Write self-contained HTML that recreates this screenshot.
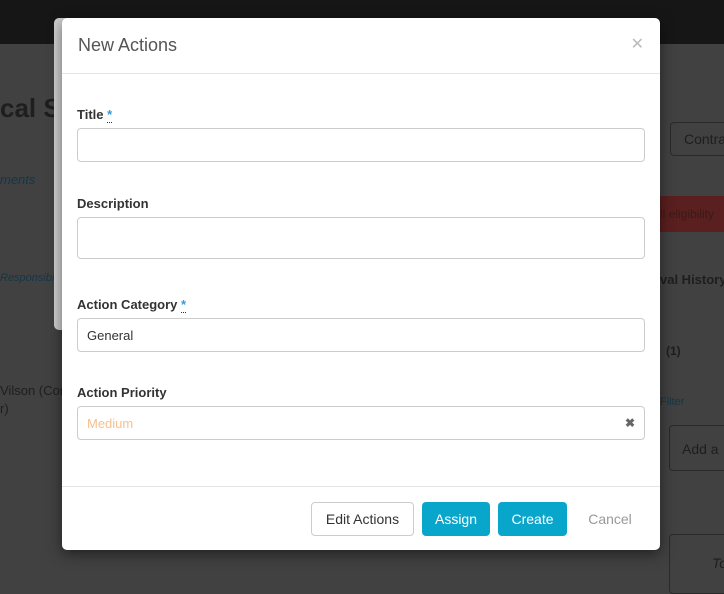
<!DOCTYPE html>
<html style="background:#414141"><head><style>
*{box-sizing:border-box;margin:0;padding:0}
body{width:724px;height:588px;overflow:hidden;background:#414141;font-family:"Liberation Sans",sans-serif;position:relative}
.nav{position:absolute;left:0;top:0;width:724px;height:44px;background:#161616}
.bg{position:absolute;color:#1e1e1e;white-space:nowrap;overflow:hidden}
.m2{position:absolute;left:54px;top:18px;width:560px;height:312px;background:#cfcfcf;border-radius:5px}
.modal{position:absolute;left:62px;top:18px;width:598px;height:532px;background:#fff;border-radius:5px;box-shadow:0 4px 14px rgba(0,0,0,.5)}
.hd{height:56px;border-bottom:1px solid #e5e5e5;padding:17px 16px;font-size:18px;color:#555;position:relative}
.x{position:absolute;right:16px;top:16px;color:#bbb;font-size:16px}
label{position:absolute;left:15px;font-size:13px;font-weight:bold;color:#333}
label i{font-style:normal;color:#3a9ad9;border-bottom:1px dotted #333}
.in{position:absolute;left:15px;width:568px;border:1px solid #ccc;border-radius:4px;font-size:13px;padding:0 9px;display:flex;align-items:center;color:#333}
.ft{position:absolute;left:0;top:468px;width:598px;border-top:1px solid #e5e5e5}
.btn{position:absolute;top:484px;height:34px;border-radius:4px;font-size:14px;display:flex;align-items:center;justify-content:center}
</style></head><body>
<div class="nav"></div>
<div class="bg" style="left:0;top:93px;font-size:26px;font-weight:bold">cal S</div>
<div class="bg" style="left:0;top:172px;font-size:13px;font-style:italic;color:#14364a">ments</div>
<div class="bg" style="left:0;top:272px;font-size:11px;font-style:italic;color:#14364a">Responsibi</div>
<div class="bg" style="left:0;top:382px;font-size:13px;line-height:18px">Vilson (Com<br>r)</div>
<div class="bg" style="left:670px;top:122px;width:60px;height:34px;border:1px solid #2a2a2a;border-radius:4px;font-size:14px;padding:8px 13px">Contra</div>
<div class="bg" style="left:660px;top:196px;width:70px;height:36px;background:#5a1f1f;font-size:12px;color:#3a1a1a;padding:11px 0">ll eligibility</div>
<div class="bg" style="left:660px;top:272px;font-size:13px;font-weight:bold">val History</div>
<div class="bg" style="left:666px;top:344px;font-size:12px;font-weight:bold">(1)</div>
<div class="bg" style="left:660px;top:396px;font-size:11px;color:#14364a">Filter</div>
<div class="bg" style="left:669px;top:425px;width:60px;height:46px;border:1px solid #2a2a2a;border-radius:4px;font-size:14px;padding:15px 12px">Add a</div>
<div class="bg" style="left:669px;top:534px;width:60px;height:60px;border:1px solid #2a2a2a;border-radius:4px;font-size:14px;font-style:italic;padding:20px 42px">To</div>
<div class="m2"></div>
<div class="modal">
<div class="hd">New Actions<span class="x">✕</span></div>
<label style="top:89px">Title <i>*</i></label>
<div class="in" style="top:110px;height:34px"></div>
<label style="top:178px">Description</label>
<div class="in" style="top:199px;height:42px"></div>
<label style="top:279px">Action Category <i>*</i></label>
<div class="in" style="top:300px;height:34px">General</div>
<label style="top:367px">Action Priority</label>
<div class="in" style="top:388px;height:34px;color:#f9c08d;justify-content:space-between">Medium<span style="color:#666;font-size:12px;font-weight:bold">✖</span></div>
<div class="ft"></div>
<div class="btn" style="left:249px;width:103px;border:1px solid #ccc;color:#333">Edit Actions</div>
<div class="btn" style="left:360px;width:68px;background:#09a6cc;color:#fff">Assign</div>
<div class="btn" style="left:436px;width:69px;background:#09a6cc;color:#fff">Create</div>
<div class="btn" style="left:515px;width:66px;color:#999">Cancel</div>
</div>
</body></html>
